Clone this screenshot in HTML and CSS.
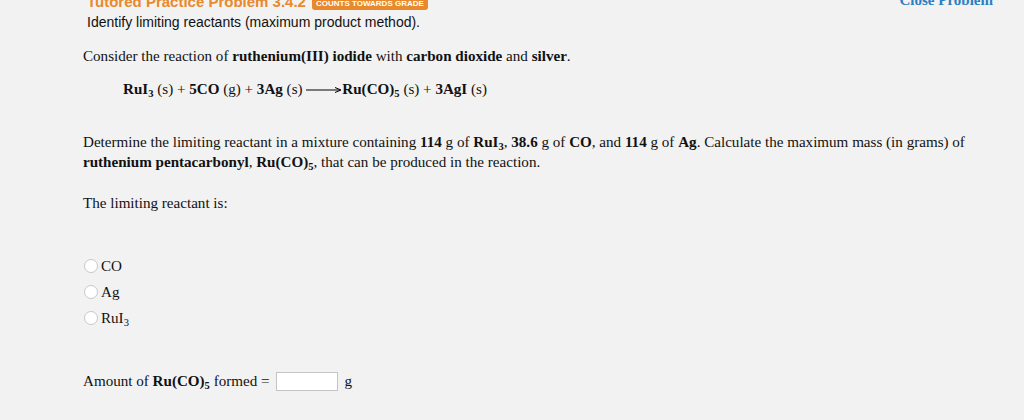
FILE: index.html
```html
<!DOCTYPE html>
<html>
<head>
<meta charset="utf-8">
<link rel="stylesheet" href="styles.css">
</head>
<body>
<div class="header">
  <div class="title-row">
    <span class="title">Tutored Practice Problem 3.4.2</span>
    <span class="badge">COUNTS TOWARDS GRADE</span>
  </div>
  <a class="close">Close Problem</a>
</div>
<div class="subtitle">Identify limiting reactants (maximum product method).</div>

<div class="content">
  <p class="intro">Consider the reaction of <b>ruthenium(III) iodide</b> with <b>carbon dioxide</b> and <b>silver</b>.</p>
  <p class="equation"><b>RuI<sub>3</sub></b> (s) + <b>5CO</b> (g) + <b>3Ag</b> (s) <svg class="arrow" width="36" height="8" viewBox="0 0 36 8"><line x1="0" y1="4" x2="34" y2="4" stroke="#000" stroke-width="1"/><path d="M29 1.5 L35 4 L29 6.5" fill="none" stroke="#000" stroke-width="1"/></svg><b>Ru(CO)<sub>5</sub></b> (s) + <b>3AgI</b> (s)</p>

  <p class="question">Determine the limiting reactant in a mixture containing <b>114</b> g of <b>RuI<sub>3</sub></b>, <b>38.6</b> g of <b>CO</b>, and <b>114</b> g of <b>Ag</b>. Calculate the maximum mass (in grams) of <b>ruthenium pentacarbonyl</b>, <b>Ru(CO)<sub>5</sub></b>, that can be produced in the reaction.</p>

  <p class="limiting">The limiting reactant is:</p>

  <div class="options">
    <label class="option"><span class="radio"></span><span>CO</span></label>
    <label class="option"><span class="radio"></span><span>Ag</span></label>
    <label class="option"><span class="radio"></span><span>RuI<sub>3</sub></span></label>
  </div>

  <div class="amount"><span>Amount of <b>Ru(CO)<sub>5</sub></b> formed =</span><span class="input"></span><span class="unit">g</span></div>
</div>
</body>
</html>
```
FILE: styles.css
```css
html, body {
  margin: 0;
  padding: 0;
  background: #f2f2f2;
  width: 1024px;
  height: 420px;
  overflow: hidden;
}
body {
  font-family: "Liberation Serif", "Times New Roman", serif;
  color: #111;
}
.header {
  display: flex;
  justify-content: space-between;
  align-items: flex-start;
  margin-top: -7px;
  padding: 0 31px 0 87px;
  height: 18px;
}
.title-row {
  display: flex;
  align-items: center;
  gap: 6px;
}
.title {
  font-family: "Liberation Sans", Arial, sans-serif;
  font-weight: bold;
  font-size: 15px;
  color: #e8892b;
  line-height: 18px;
}
.badge {
  font-family: "Liberation Sans", Arial, sans-serif;
  font-weight: bold;
  font-size: 8px;
  color: #fff;
  background: #e8892b;
  border-radius: 3px;
  padding: 1px 4px;
  line-height: 10px;
  margin-top: 3px;
}
.close {
  font-family: "Liberation Serif", "Times New Roman", serif;
  font-weight: bold;
  font-size: 15px;
  color: #2b7fc3;
  line-height: 18px;
  margin-top: -2px;
}
.subtitle {
  font-family: "Liberation Sans", Arial, sans-serif;
  font-size: 14px;
  color: #111;
  padding-left: 87px;
  line-height: 18px;
  margin-top: 2px;
}
.content {
  padding-left: 83px;
  font-size: 15.1px;
  line-height: 20px;
}
p { margin: 0; }
sub {
  font-size: 70%;
  line-height: 0;
  vertical-align: -0.3em;
}
.intro { margin-top: 15px; }
.equation {
  margin-top: 13px;
  padding-left: 40px;
}
.arrow { vertical-align: middle; position: relative; top: -1px; }
.question { margin-top: 33px; width: 900px; }
.limiting { margin-top: 21px; }
.options {
  margin-top: 43px;
  display: flex;
  flex-direction: column;
  gap: 6px;
}
.option {
  display: flex;
  align-items: center;
  height: 20px;
}
.radio {
  width: 12px;
  height: 12px;
  border: 1px solid #c8c8c8;
  border-radius: 50%;
  background: #fff;
  margin: 0 3px 0 1px;
}
.amount {
  margin-top: 43px;
  display: flex;
  align-items: center;
}
.input {
  display: inline-block;
  width: 60px;
  height: 17px;
  background: #fff;
  border: 1px solid #c4c4c4;
  margin-left: 6px;
}
.unit { margin-left: 7px; }
```
